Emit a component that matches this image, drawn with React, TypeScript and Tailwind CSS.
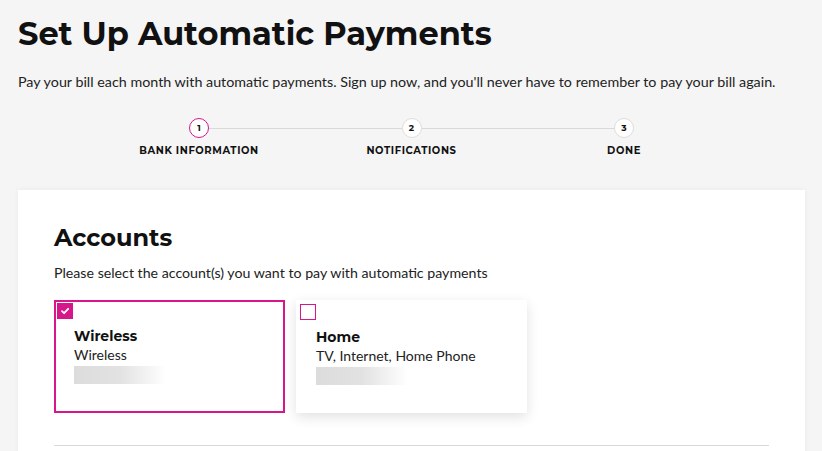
import React from "react";

const head = { fontFamily: "Montserrat, Inter, 'Liberation Sans', sans-serif" };
const body = { fontFamily: "Lato, 'Open Sans', sans-serif" };

function Step({ n, label, active }: { n: number; label: string; active?: boolean }) {
  return (
    <div className="flex flex-col items-center w-[140px]">
      <div
        className={`w-[20px] h-[20px] rounded-full bg-white flex items-center justify-center text-[9px] font-bold text-[#111] ${
          active ? "border-[1.5px] border-[#d6168b]" : "border border-[#ddd]"
        }`}
        style={head}
      >
        {n}
      </div>
      <div className="mt-[5px] text-[10px] font-bold tracking-[0.06em] text-[#111]" style={head}>
        {label}
      </div>
    </div>
  );
}

function Account({ title, sub, checked }: { title: string; sub: string; checked?: boolean }) {
  return (
    <div
      className={`w-[231px] h-[113px] bg-white flex flex-col ${
        checked ? "border-2 border-[#d6168b]" : "shadow-[0_4px_12px_rgba(0,0,0,0.12)]"
      }`}
    >
      <div className={checked ? "pl-[1px] pt-[1px]" : "pl-[4px] pt-[4px]"}>
        {checked ? (
          <div className="w-[16px] h-[16px] bg-[#d6168b] flex items-center justify-center">
            <svg width="10" height="10" viewBox="0 0 10 10">
              <path d="M2 5.2 L4.1 7.2 L8.2 2.8" stroke="white" strokeWidth="1.8" fill="none" strokeLinecap="round" strokeLinejoin="round" />
            </svg>
          </div>
        ) : (
          <div className="w-[16px] h-[16px] border border-[#d6168b] bg-white" />
        )}
      </div>
      <div className={checked ? "pl-[18px] pt-[8px]" : "pl-[20px] pt-[8px]"}>
        <div className="text-[14px] font-bold text-[#111] leading-[18px]" style={head}>{title}</div>
        <div className="text-[14px] text-[#222] leading-[20px]" style={body}>{sub}</div>
        <div className="mt-[1px] w-[92px] h-[18px] bg-gradient-to-r from-[#dcdcdc] via-[#e2e2e2] to-white" />
      </div>
    </div>
  );
}

export default function App() {
  return (
    <div className="w-[822px] h-[451px] bg-[#f5f5f5] overflow-hidden">
      <div className="px-[18px] pt-[14px]">
        <h1 className="text-[32px] font-bold text-[#111] leading-[40px]" style={head}>
          Set Up Automatic Payments
        </h1>
        <p className="mt-[18px] text-[14.3px] text-[#222] leading-[20px]" style={body}>
          Pay your bill each month with automatic payments. Sign up now, and you'll never have to remember to pay your bill again.
        </p>
        <div className="relative mt-[26px] flex justify-between w-[565px] ml-[111px]">
          <div className="absolute top-[10px] left-[70px] right-[70px] h-px bg-[#d9d9d9]" />
          <div className="relative z-10"><Step n={1} label="BANK INFORMATION" active /></div>
          <div className="relative z-10"><Step n={2} label="NOTIFICATIONS" /></div>
          <div className="relative z-10"><Step n={3} label="DONE" /></div>
        </div>
        <div className="mt-[32px] bg-white shadow-[0_0_6px_rgba(0,0,0,0.05)] w-[787px] h-[300px] px-[36px] pt-[33px]">
          <h2 className="text-[24px] font-bold text-[#111] leading-[30px]" style={head}>Accounts</h2>
          <p className="mt-[11px] text-[14.2px] text-[#222] leading-[18px]" style={body}>
            Please select the account(s) you want to pay with automatic payments
          </p>
          <div className="mt-[18px] flex gap-[11px]">
            <Account title="Wireless" sub="Wireless" checked />
            <Account title="Home" sub="TV, Internet, Home Phone" />
          </div>
          <div className="mt-[32px] h-px bg-[#d9d9d9]" />
        </div>
      </div>
    </div>
  );
}
